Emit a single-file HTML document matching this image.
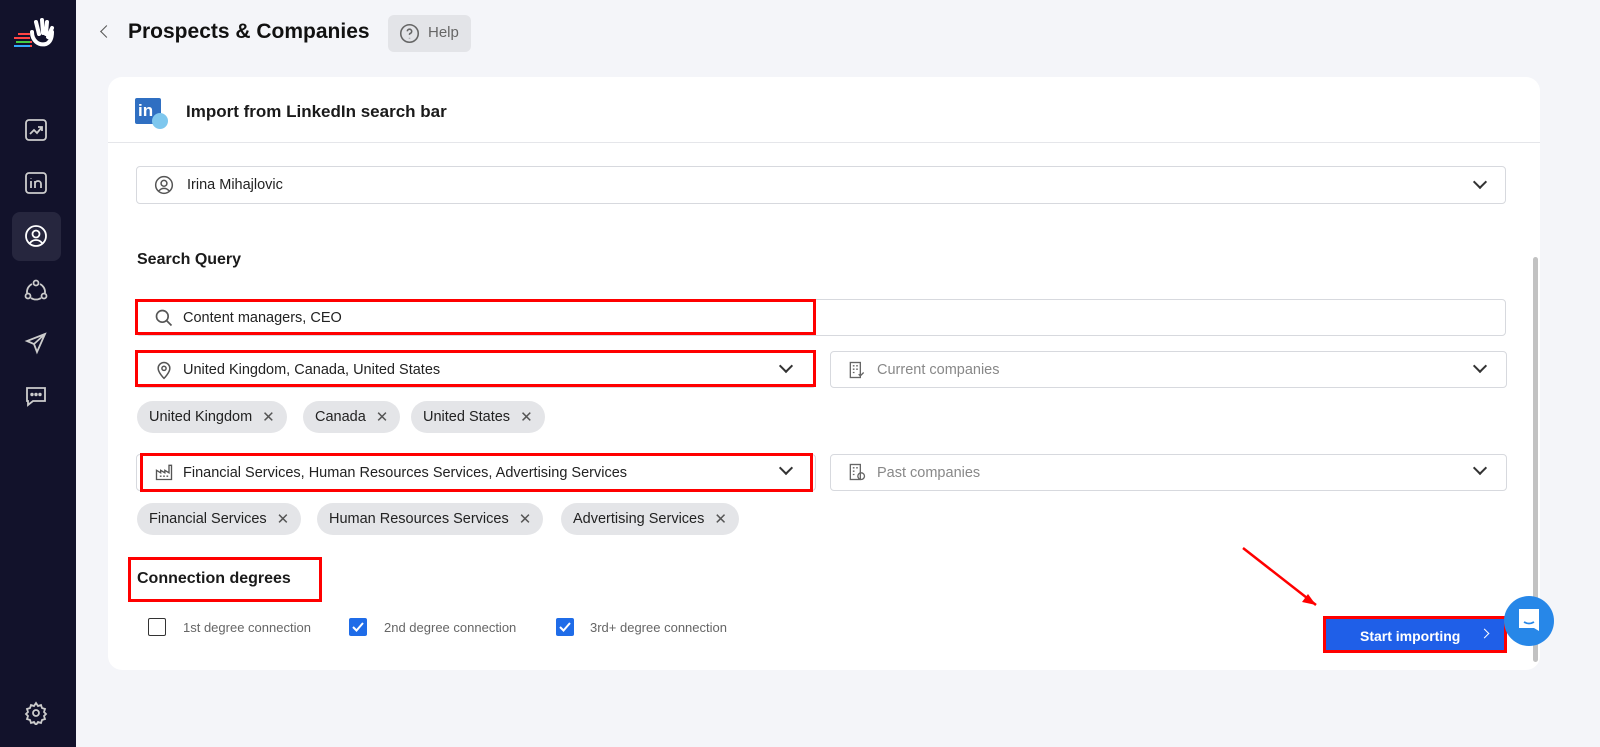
<!DOCTYPE html>
<html><head><style>
*{box-sizing:border-box;margin:0;padding:0}
body{width:1600px;height:747px;background:#f4f5f9;font-family:"Liberation Sans",sans-serif;position:relative;overflow:hidden;color:#1a1a1a}
.sb{position:absolute;left:0;top:0;width:76px;height:747px;background:#12122b}
.ic{position:absolute;left:24px;width:24px;height:24px}
.abs{position:absolute}
.card{position:absolute;left:108px;top:77px;width:1432px;height:593px;background:#fff;border-radius:14px}
.inp{position:absolute;border:1px solid #d7d9de;border-radius:4px;background:#fff;font-size:14.5px;color:#222;display:flex;align-items:center}
.ph{color:#888}
.red{position:absolute;border:3px solid #f00}
.tag{position:absolute;height:32px;border-radius:16px;background:#e4e5e8;font-size:14.5px;display:flex;align-items:center;padding:0 12px;color:#222}
.tag span{margin-left:10px;color:#555;font-size:15px}
.chev{position:absolute;width:10px;height:10px;border-right:2px solid #333;border-bottom:2px solid #333;transform:rotate(45deg)}
.cb{position:absolute;width:18px;height:18px;border-radius:2px}
.lbl{position:absolute;font-size:13px;color:#666}
</style></head><body>
<div class="sb">
<svg class="abs" style="left:12px;top:18px" width="46" height="34" viewBox="0 0 46 34"><path d="M24 4l3 12M30 2l1 13M35 4l-1 12M40 10l-4 9M20 14c0 8 6 14 14 12 5-2 6-8 6-12" stroke="#fff" stroke-width="4" fill="none" stroke-linecap="round"/><path d="M2 20h16M4 24h16M2 28h18M6 16h12" stroke="#f44" stroke-width="2"/><path d="M4 24h14" stroke="#4c4" stroke-width="2"/><path d="M2 28h16" stroke="#3af" stroke-width="2"/></svg>
<svg class="ic" style="top:118px" viewBox="0 0 24 24" fill="none" stroke="#ccc" stroke-width="1.8"><rect x="2" y="2" width="20" height="20" rx="3"/><path d="M6 16l4-4 3 3 5-6M14 9h4v4"/></svg>
<svg class="ic" style="top:171px" viewBox="0 0 24 24" fill="none" stroke="#ccc" stroke-width="1.8"><rect x="2" y="2" width="20" height="20" rx="3"/><path d="M7 10v7M7 7v.5M11 17v-7M11 13c0-4 6-4 6 0v4"/></svg>
<div class="abs" style="left:12px;top:212px;width:49px;height:49px;background:#26263e;border-radius:8px"></div>
<svg class="ic" style="top:224px" viewBox="0 0 24 24" fill="none" stroke="#fff" stroke-width="1.8"><circle cx="12" cy="12" r="10"/><circle cx="12" cy="10" r="3.5"/><path d="M6 19c3-4 9-4 12 0"/></svg>
<svg class="ic" style="top:278px" viewBox="0 0 24 24" fill="none" stroke="#ccc" stroke-width="1.8"><circle cx="12" cy="5" r="2.5"/><circle cx="4" cy="18" r="2.5"/><circle cx="20" cy="18" r="2.5"/><path d="M8 6a9 9 0 0 0-5 9M16 6a9 9 0 0 1 5 9M7 20a9 9 0 0 0 10 0"/></svg>
<svg class="ic" style="top:331px" viewBox="0 0 24 24" fill="none" stroke="#ccc" stroke-width="1.8"><path d="M21 3L3 10l7 3 3 8z M10 13l11-10"/></svg>
<svg class="ic" style="top:384px" viewBox="0 0 24 24" fill="none" stroke="#ccc" stroke-width="1.8"><path d="M3 4h18v13H9l-5 4v-4H3z"/><circle cx="8" cy="10.5" r=".8" fill="#ccc"/><circle cx="12" cy="10.5" r=".8" fill="#ccc"/><circle cx="16" cy="10.5" r=".8" fill="#ccc"/></svg>
<svg class="ic" style="top:701px" viewBox="0 0 24 24" fill="none" stroke="#ccc" stroke-width="1.8"><circle cx="12" cy="12" r="3"/><path d="M12 2l2 3 3-1 1 3 3 1-1 3 2 2-2 2 1 3-3 1-1 3-3-1-2 3-2-3-3 1-1-3-3-1 1-3-2-2 2-2-1-3 3-1 1-3 3 1z"/></svg>
</div>
<div class="abs" style="left:102px;top:27px;width:9px;height:9px;border-left:1.8px solid #555;border-bottom:1.8px solid #555;transform:rotate(45deg)"></div>
<div class="abs" style="left:128px;top:20px;font-size:21px;font-weight:bold;color:#111">Prospects &amp; Companies</div>
<div class="abs" style="left:388px;top:15px;width:83px;height:37px;background:#e3e4e8;border-radius:6px;font-size:15px;color:#666;padding:9px 0 0 40px">Help</div>
<svg class="abs" style="left:399px;top:23px" width="21" height="21" viewBox="0 0 24 24" fill="none" stroke="#666" stroke-width="1.8"><circle cx="12" cy="12" r="10"/><path d="M9.5 9.5a2.5 2.5 0 1 1 3 2.5c-.5.2-.5.8-.5 1.5M12 17v.5"/></svg>
<div class="card">
<div class="abs" style="left:27px;top:21px;width:26px;height:26px;background:#2f6fc2;border-radius:2px;color:#fff;font-weight:bold;font-size:17px;padding:3px 0 0 3px">in</div>
<div class="abs" style="left:44px;top:36px;width:16px;height:16px;background:#7ec7ee;border-radius:50%"></div>
<div class="abs" style="left:78px;top:25px;font-size:17px;font-weight:bold">Import from LinkedIn search bar</div>
<div class="abs" style="left:0;top:65px;width:1432px;height:1px;background:#e5e6ea"></div>
<div class="abs" style="left:1425px;top:180px;width:5px;height:405px;background:#c2c2c2;border-radius:3px"></div>
</div>
<div class="inp" style="left:136px;top:166px;width:1370px;height:38px;padding-left:50px">Irina Mihajlovic</div>
<svg class="abs" style="left:154px;top:175px" width="20" height="20" viewBox="0 0 24 24" fill="none" stroke="#555" stroke-width="1.8"><circle cx="12" cy="12" r="10"/><circle cx="12" cy="10" r="3.5"/><path d="M6 19c3-4 9-4 12 0"/></svg>
<div class="chev" style="left:1475px;top:177px"></div>
<div class="abs" style="left:137px;top:251px;font-size:16px;font-weight:bold">Search Query</div>
<div class="inp" style="left:136px;top:299px;width:1370px;height:37px;padding-left:46px">Content managers, CEO</div>
<svg class="abs" style="left:154px;top:308px" width="20" height="20" viewBox="0 0 24 24" fill="none" stroke="#555" stroke-width="2"><circle cx="10" cy="10" r="7"/><path d="M15 15l6 6"/></svg>
<div class="red" style="left:135px;top:299px;width:681px;height:36px"></div>
<div class="inp" style="left:136px;top:351px;width:680px;height:37px;padding-left:46px">United Kingdom, Canada, United States</div>
<svg class="abs" style="left:154px;top:360px" width="20" height="20" viewBox="0 0 24 24" fill="none" stroke="#555" stroke-width="1.8"><path d="M12 22s7-7 7-12a7 7 0 0 0-14 0c0 5 7 12 7 12z"/><circle cx="12" cy="10" r="2.5"/></svg>
<div class="chev" style="left:781px;top:361px"></div>
<div class="red" style="left:135px;top:350px;width:681px;height:37px"></div>
<div class="inp ph" style="left:830px;top:351px;width:677px;height:37px;padding-left:46px;color:#888">Current companies</div>
<svg class="abs" style="left:847px;top:360px" width="20" height="20" viewBox="0 0 24 24" fill="none" stroke="#666" stroke-width="1.6"><rect x="4" y="3" width="12" height="18"/><path d="M7 7h2M11 7h2M7 11h2M11 11h2M7 15h2M14 17l2 2 4-4"/></svg>
<div class="chev" style="left:1475px;top:361px"></div>
<div class="tag" style="left:137px;top:401px">United Kingdom<span>✕</span></div>
<div class="tag" style="left:303px;top:401px">Canada<span>✕</span></div>
<div class="tag" style="left:411px;top:401px">United States<span>✕</span></div>
<div class="inp" style="left:136px;top:454px;width:680px;height:37px;padding-left:46px">Financial Services, Human Resources Services, Advertising Services</div>
<svg class="abs" style="left:154px;top:462px" width="20" height="20" viewBox="0 0 24 24" fill="none" stroke="#555" stroke-width="1.6"><path d="M3 21V10l5 3v-3l5 3v-3l5 3V4h3v17zM7 17h2M11 17h2M15 17h2"/></svg>
<div class="chev" style="left:781px;top:463px"></div>
<div class="red" style="left:140px;top:453px;width:673px;height:39px"></div>
<div class="inp" style="left:830px;top:454px;width:677px;height:37px;padding-left:46px;color:#888">Past companies</div>
<svg class="abs" style="left:847px;top:462px" width="20" height="20" viewBox="0 0 24 24" fill="none" stroke="#666" stroke-width="1.6"><rect x="4" y="3" width="12" height="18"/><path d="M7 7h2M11 7h2M7 11h2M7 15h2"/><circle cx="17" cy="17" r="4"/></svg>
<div class="chev" style="left:1475px;top:463px"></div>
<div class="tag" style="left:137px;top:503px">Financial Services<span>✕</span></div>
<div class="tag" style="left:317px;top:503px">Human Resources Services<span>✕</span></div>
<div class="tag" style="left:561px;top:503px">Advertising Services<span>✕</span></div>
<div class="abs" style="left:137px;top:570px;font-size:16px;font-weight:bold">Connection degrees</div>
<div class="red" style="left:128px;top:557px;width:194px;height:45px"></div>
<div class="cb" style="left:148px;top:618px;border:1.5px solid #333"></div>
<div class="lbl" style="left:183px;top:620px">1st degree connection</div>
<div class="cb" style="left:349px;top:618px;background:#1f6ce8"><svg width="18" height="18" viewBox="0 0 18 18"><path d="M4 9l3.5 3.5L14 5" stroke="#fff" stroke-width="2" fill="none"/></svg></div>
<div class="lbl" style="left:384px;top:620px">2nd degree connection</div>
<div class="cb" style="left:556px;top:618px;background:#1f6ce8"><svg width="18" height="18" viewBox="0 0 18 18"><path d="M4 9l3.5 3.5L14 5" stroke="#fff" stroke-width="2" fill="none"/></svg></div>
<div class="lbl" style="left:590px;top:620px">3rd+ degree connection</div>
<svg class="abs" style="left:1240px;top:545px" width="80" height="65"><path d="M3 3L76 60" stroke="#f00" stroke-width="2.5"/><path d="M76 60l-14-3 6-8z" fill="#f00"/></svg>
<div class="abs" style="left:1323px;top:616px;width:184px;height:37px;background:#1f5fe8;border:3px solid #f00;color:#fff;font-weight:bold;font-size:14px;padding:9px 0 0 34px">Start importing</div>
<div class="abs" style="left:1481px;top:630px;width:7px;height:7px;border-right:1.5px solid #fff;border-top:1.5px solid #fff;transform:rotate(45deg)"></div>
<div class="abs" style="left:1504px;top:596px;width:50px;height:50px;border-radius:50%;background:#2787e8"></div>
<svg class="abs" style="left:1516px;top:606px" width="26" height="30" viewBox="0 0 26 30"><path d="M3 3h20v22l-5-3H3z" fill="#fff"/><path d="M8 16q5 3 10 0" stroke="#2787e8" stroke-width="1.8" fill="none"/></svg>
</body></html>
